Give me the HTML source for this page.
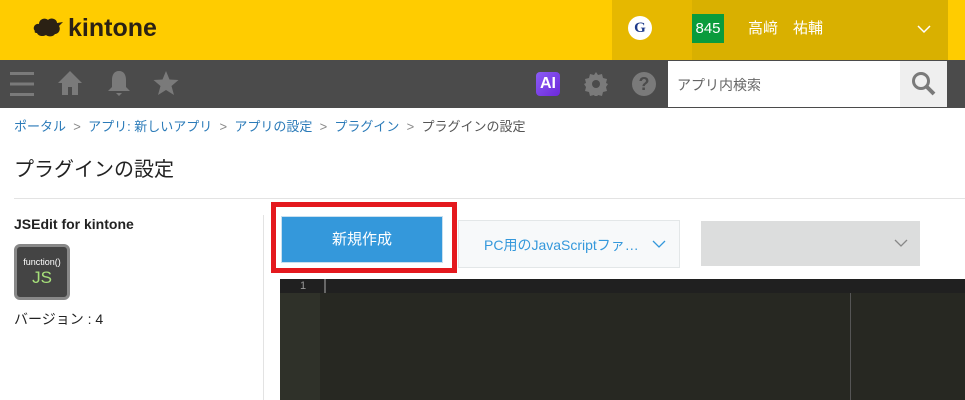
<!DOCTYPE html>
<html><head><meta charset="utf-8"><style>
*{margin:0;padding:0;box-sizing:border-box}
body{width:965px;height:400px;overflow:hidden;background:#fff;font-family:"Liberation Sans","Noto Sans CJK JP",sans-serif;position:relative}
.a{position:absolute}
</style></head><body>
<div class="a" style="left:0;top:0;width:965px;height:60px;background:#ffcc00"></div>
<svg class="a" style="left:32px;top:15px" width="36" height="26" viewBox="0 0 36 26"><path d="M3 16c-3-3 0-8 4-7 0-5 6-7 9-4 3-3 9-1 9 3l6-1-4 4c2 3 0 8-4 8-2 3-7 3-9 1-3 2-8 1-9-2-2 0-3-1-2-2z" fill="#2b2114"/></svg>
<div class="a" style="left:68px;top:14px;font-size:25px;font-weight:bold;color:#2b2114">kintone</div>
<div class="a" style="left:612px;top:0;width:80px;height:60px;background:#e6b800"></div>
<div class="a" style="left:628px;top:16px;width:24px;height:24px;border-radius:50%;background:#fff;color:#1e3a8a;font:bold 15px 'Liberation Serif',serif;text-align:center;line-height:24px">G</div>
<div class="a" style="left:692px;top:0;width:256px;height:60px;background:#d9b000"></div>
<div class="a" style="left:692px;top:14px;width:32px;height:29px;background:#0a9b3c;color:#fff;font-size:15px;text-align:center;line-height:29px">845</div>
<div class="a" style="left:748px;top:17px;color:#fff;font-size:15px">高﨑　祐輔</div>
<svg class="a" style="left:917px;top:24px" width="14" height="10"><path d="M1 2l6 6 6-6" stroke="#fff" stroke-width="1.5" fill="none"/></svg>
<div class="a" style="left:0;top:60px;width:965px;height:48px;background:#4b4b4b"></div>
<svg class="a" style="left:10px;top:72px" width="24" height="24"><path d="M0 1.5h24M0 12h24M0 22.5h24" stroke="#7a7a7a" stroke-width="3"/></svg>
<svg class="a" style="left:57px;top:70px" width="26" height="26"><path d="M13 1L1 13h4v12h6v-8h4v8h6V13h4z" fill="#7a7a7a"/></svg>
<svg class="a" style="left:106px;top:70px" width="26" height="28"><path d="M13 1c-5 0-7 4-7 9v7l-4 4h22l-4-4v-7c0-5-2-9-7-9zM10 23h6l-3 3z" fill="#7a7a7a"/></svg>
<svg class="a" style="left:153px;top:71px" width="26" height="25"><path d="M13 0l3.5 8.5 9 .5-7 6 2.5 9-8-5-8 5 2.5-9-7-6 9-.5z" fill="#7a7a7a"/></svg>
<div class="a" style="left:536px;top:72px;width:24px;height:24px;border-radius:4px;background:linear-gradient(135deg,#8b5cf6,#6d28d9);color:#fff;font:bold 16px 'Liberation Sans';text-align:center;line-height:24px">AI</div>
<svg class="a" style="left:584px;top:72px" width="24" height="24" viewBox="0 0 24 24"><path d="M12 0l2 3 4-1 1 4 4 1-1 4 2 1-2 3 1 4-4 1-1 4-4-1-2 3-2-3-4 1-1-4-4-1 1-4-2-3 2-1-1-4 4-1 1-4 4 1z" fill="#7a7a7a"/><circle cx="12" cy="12" r="4" fill="#4b4b4b"/></svg>
<div class="a" style="left:632px;top:72px;width:24px;height:24px;border-radius:50%;background:#7a7a7a;color:#4b4b4b;font:bold 18px 'Liberation Sans';text-align:center;line-height:24px">?</div>
<div class="a" style="left:668px;top:61px;width:232px;height:46px;background:#fff;color:#666;font-size:14px;padding:14px 9px">アプリ内検索</div>
<div class="a" style="left:900px;top:61px;width:47px;height:46px;background:#efefef"></div>
<svg class="a" style="left:911px;top:71px" width="26" height="26"><circle cx="10" cy="10" r="7.5" stroke="#7a7a7a" stroke-width="3" fill="none"/><path d="M15 15l8 8" stroke="#7a7a7a" stroke-width="4"/></svg>
<div class="a" style="left:14px;top:116px;font-size:13px;color:#888;white-space:nowrap"><span style="color:#2a7ab8">ポータル</span> &nbsp;&gt;&nbsp; <span style="color:#2a7ab8">アプリ: 新しいアプリ</span> &nbsp;&gt;&nbsp; <span style="color:#2a7ab8">アプリの設定</span> &nbsp;&gt;&nbsp; <span style="color:#2a7ab8">プラグイン</span> &nbsp;&gt;&nbsp; <span style="color:#555">プラグインの設定</span></div>
<div class="a" style="left:14px;top:153px;font-size:20px;color:#222">プラグインの設定</div>
<div class="a" style="left:14px;top:198px;width:951px;height:1px;background:#e3e3e3"></div>
<div class="a" style="left:14px;top:216px;font-size:14px;font-weight:bold;color:#222">JSEdit for kintone</div>
<div class="a" style="left:14px;top:244px;width:56px;height:56px;border-radius:6px;background:#444;border:3px solid #888;color:#fff;text-align:center">
<div style="font-size:9px;margin-top:10px">function()</div><div style="font-size:17px;color:#a6e07a;margin-top:1px">JS</div></div>
<div class="a" style="left:14px;top:309px;font-size:14px;color:#222">バージョン : 4</div>
<div class="a" style="left:263px;top:215px;width:1px;height:185px;background:#e3e3e3"></div>
<div class="a" style="left:271px;top:202px;width:186px;height:71px;border:5px solid #e4191e"></div>
<div class="a" style="left:281px;top:216px;width:162px;height:47px;background:#3498db;border:1px solid #c8e0f0;color:#fff;font-size:15px;text-align:center;line-height:45px">新規作成</div>
<div class="a" style="left:458px;top:220px;width:222px;height:48px;background:#f7f9fa;border:1px solid #e3e7e8;color:#3498db;font-size:14px;padding:14px 0 0 25px;white-space:nowrap">PC用のJavaScriptファ…</div>
<svg class="a" style="left:652px;top:239px" width="14" height="10"><path d="M1 2l6 6 6-6" stroke="#3498db" stroke-width="1.3" fill="none"/></svg>
<div class="a" style="left:701px;top:221px;width:219px;height:45px;background:#dcdddd"></div>
<svg class="a" style="left:894px;top:238px" width="14" height="10"><path d="M1 2l6 6 6-6" stroke="#888" stroke-width="1.3" fill="none"/></svg>
<div class="a" style="left:280px;top:279px;width:685px;height:121px;background:#272822"></div>
<div class="a" style="left:280px;top:279px;width:685px;height:14px;background:#202020"></div>
<div class="a" style="left:280px;top:293px;width:40px;height:107px;background:#2f3129"></div>
<div class="a" style="left:300px;top:279px;font-size:11px;color:#999;line-height:14px">1</div>
<div class="a" style="left:324px;top:279px;width:2px;height:14px;background:#666"></div>
<div class="a" style="left:850px;top:293px;width:1px;height:107px;background:#555"></div>
</body></html>
